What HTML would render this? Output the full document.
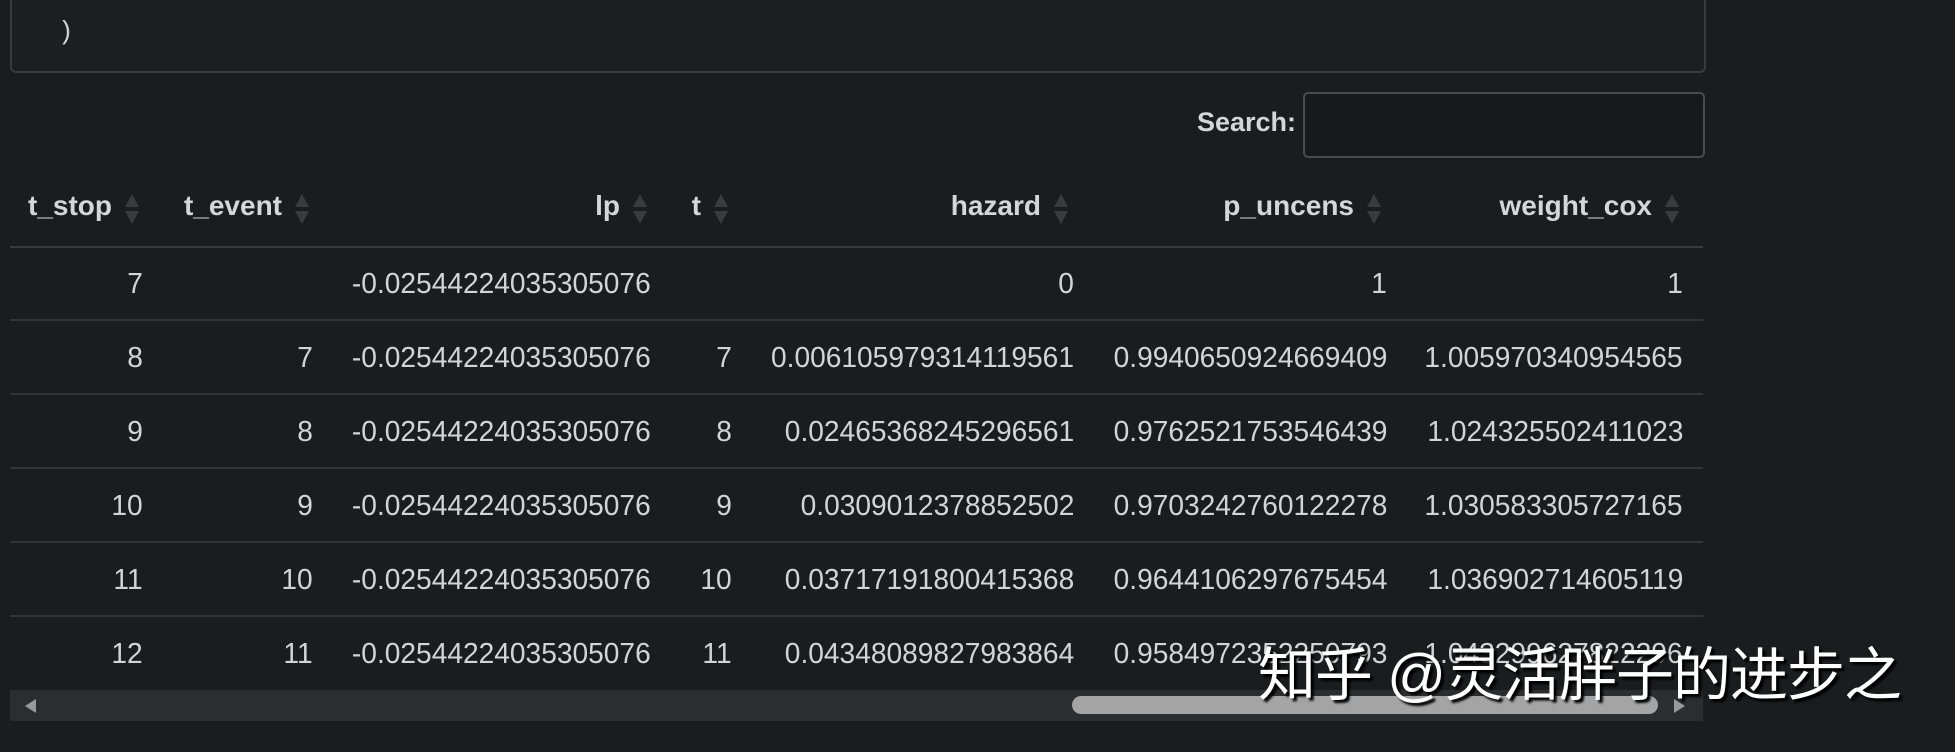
<!DOCTYPE html>
<html><head><meta charset="utf-8"><style>
body{margin:0;width:1955px;height:752px;background:#1b1c1e;overflow:hidden;font-family:"Liberation Sans",Arial,sans-serif;color:#d2d2d2;position:relative}
.a{position:absolute;white-space:nowrap}
.code{left:10px;top:-10px;width:1692px;height:79px;border:2px solid #3a3b3d;border-radius:6px;background:#1d1e20}
.h{font-weight:bold;font-size:28px;top:190px;color:#d6d6d6}
.r{font-size:28.5px;color:#d4d4d4;transform:scaleX(0.987);transform-origin:right}
.line{left:10px;width:1693px;height:2px;background:#333436}
.arr{width:16px;height:34px;top:192px}
</style></head><body>
<div class="a code"></div>
<div class="a" style="left:58px;top:17px;font-family:'Liberation Mono',monospace;font-size:26px;color:#cfcfcf">)</div>
<div class="a" style="right:659px;top:107px;font-weight:bold;font-size:27px;color:#d6d6d6">Search:</div>
<div class="a" style="left:1303px;top:92px;width:398px;height:62px;border:2px solid #4a4b4d;border-radius:5px;background:#18191b"></div>

<div id="hdr"></div>
<div id="rows"></div>
<div class="a line" style="top:246px;background:#3a3b3d"></div>

<div class="a" style="left:10px;top:690px;width:1693px;height:31px;background:#2c2d2f"></div>
<div class="a" style="left:1072px;top:696px;width:586px;height:18px;border-radius:9px;background:#a4a4a4"></div>
<svg class="a" style="left:22px;top:697px" width="16" height="18"><path d="M14 2 L3 9 L14 16Z" fill="#999"/></svg>
<svg class="a" style="left:1672px;top:697px" width="16" height="18"><path d="M2 2 L13 9 L2 16Z" fill="#999"/></svg>

<div class="a" style="left:1258px;top:628px;font-family:'Liberation Sans','Noto Sans CJK SC',sans-serif;font-size:58px;color:#fff;text-shadow:3px 3px 2px #000;letter-spacing:-1px">知乎 @灵活胖子的进步之</div>

<script>
var H=[["t_stop",112],["t_event",282],["lp",620],["t",701],["hazard",1041],["p_uncens",1354],["weight_cox",1652]];
var s="";
H.forEach(function(h){
 s+='<div class="a h" style="right:'+(1955-h[1])+'px">'+h[0]+'</div>';
 s+='<svg class="a arr" style="left:'+(h[1]+12)+'px"><path d="M8 2 L15 15 L1 15Z" fill="#3a3b3d"/><path d="M1 19 L15 19 L8 32Z" fill="#3a3b3d"/></svg>';
});
document.getElementById('hdr').innerHTML=s;
var R=[143,313,651,732,1074,1387,1683];
var D=[["7","","-0.02544224035305076","","0","1","1"],
["8","7","-0.02544224035305076","7","0.006105979314119561","0.9940650924669409","1.005970340954565"],
["9","8","-0.02544224035305076","8","0.02465368245296561","0.9762521753546439","1.024325502411023"],
["10","9","-0.02544224035305076","9","0.0309012378852502","0.9703242760122278","1.030583305727165"],
["11","10","-0.02544224035305076","10","0.03717191800415368","0.9644106297675454","1.036902714605119"],
["12","11","-0.02544224035305076","11","0.04348089827983864","0.9584972352250793","1.043299627822296"]];
var t="";
D.forEach(function(r,i){
 var y=268+i*74;
 r.forEach(function(v,j){ if(v) t+='<div class="a r" style="top:'+y+'px;right:'+(1955-R[j])+'px">'+v+'</div>';});
 if(i<5) t+='<div class="a line" style="top:'+(319+i*74)+'px"></div>';
});
document.getElementById('rows').innerHTML=t;
</script>
</body></html>
